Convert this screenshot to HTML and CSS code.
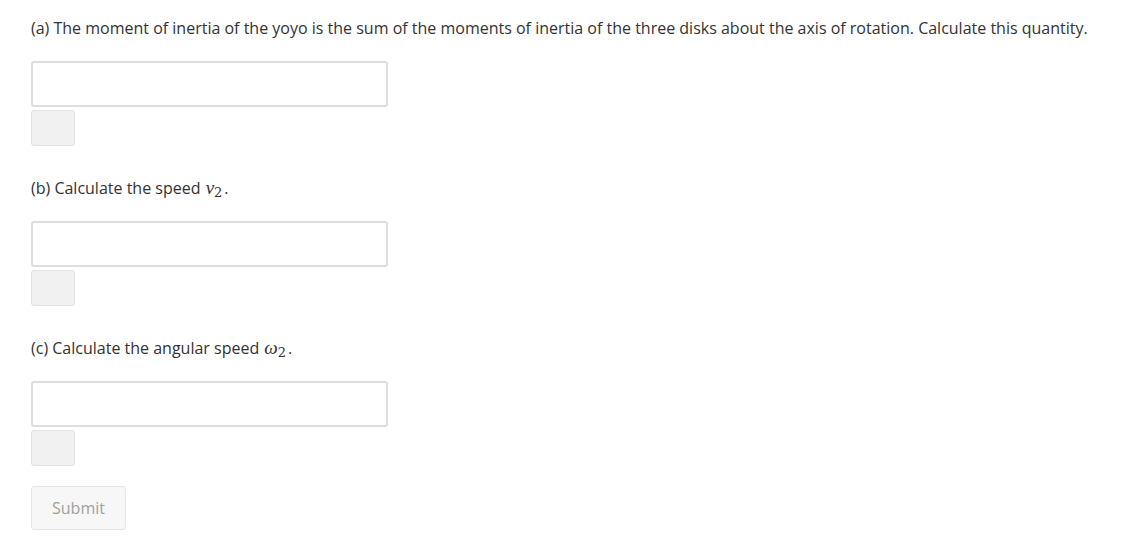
FILE: index.html
```html
<!DOCTYPE html>
<html>
<head>
<meta charset="utf-8">
<link rel="stylesheet" href="styles.css">
</head>
<body>
<div class="page">
  <section class="part">
    <p class="q">(a) The moment of inertia of the yoyo is the sum of the moments of inertia of the three disks about the axis of rotation. Calculate this quantity.</p>
    <div class="answer"></div>
    <div class="unit"></div>
  </section>
  <section class="part">
    <p class="q">(b) Calculate the speed <span class="math"><i>v</i><sub>2</sub></span>.</p>
    <div class="answer"></div>
    <div class="unit"></div>
  </section>
  <section class="part">
    <p class="q">(c) Calculate the angular speed <span class="math"><i>ω</i><sub>2</sub></span>.</p>
    <div class="answer"></div>
    <div class="unit"></div>
  </section>
  <button class="submit">Submit</button>
</div>
</body>
</html>
```
FILE: styles.css
```css
html, body {
  margin: 0;
  padding: 0;
  background: #fff;
}
.page {
  padding: 18px 0 0 31px;
  font-family: "Open Sans", "Liberation Sans", sans-serif;
  font-size: 16px;
  color: #333;
  display: flex;
  flex-direction: column;
  align-items: flex-start;
}
.part {
  display: flex;
  flex-direction: column;
  align-items: flex-start;
  margin-bottom: 32px;
}
.part:last-of-type {
  margin-bottom: 20px;
}
.q {
  margin: 0 0 23px 0;
  line-height: 20px;
  height: 20px;
  white-space: nowrap;
}
.math {
  font-family: "Liberation Serif", "DejaVu Serif", serif;
  font-size: 19px;
  margin: 0 2px 0 1px;
}
.math i {
  font-style: italic;
}
.math sub {
  font-size: 13px;
  font-family: "DejaVu Serif", serif;
  vertical-align: -3px;
  line-height: 0;
}
.answer {
  box-sizing: border-box;
  width: 357px;
  height: 46px;
  border: 2px solid #dedede;
  border-radius: 3px;
  background: #fff;
}
.unit {
  box-sizing: border-box;
  margin-top: 3px;
  width: 44px;
  height: 36px;
  border: 1px solid #e2e2e2;
  border-radius: 3px;
  background: #f1f1f1;
}
.submit {
  box-sizing: border-box;
  width: 95px;
  height: 44px;
  border: 1px solid #e6e6e6;
  border-radius: 3px;
  background: #f7f7f7;
  color: #a0a0a0;
  font-family: "Open Sans", "Liberation Sans", sans-serif;
  font-size: 16px;
  padding: 0;
}
```
